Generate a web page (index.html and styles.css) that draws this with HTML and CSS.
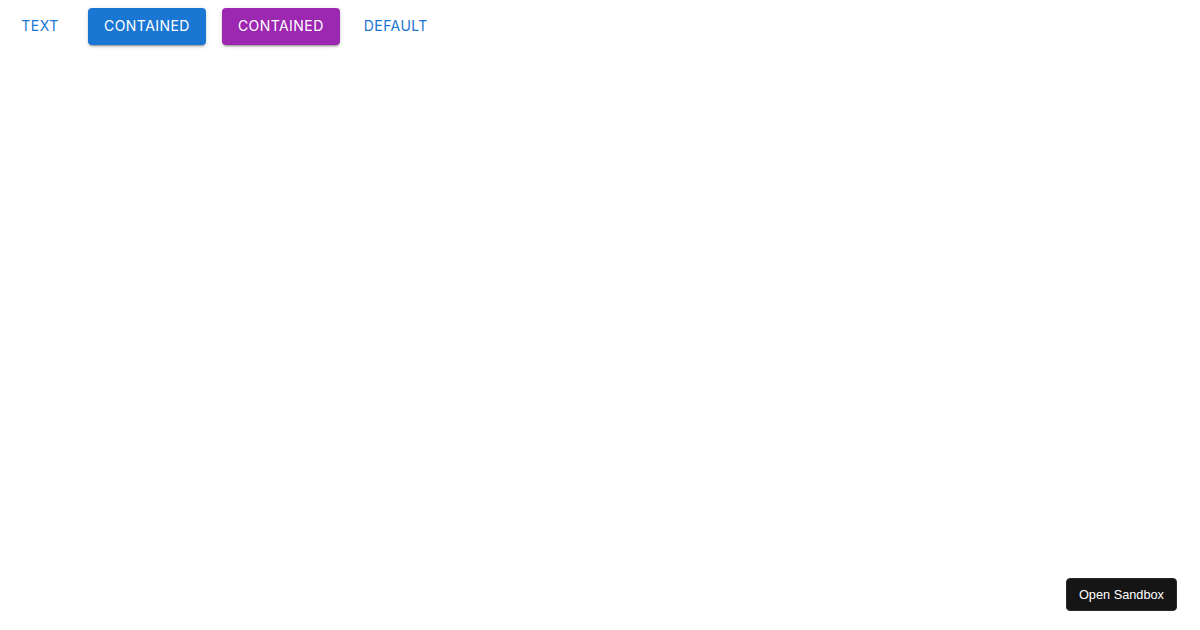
FILE: index.html
```html
<!DOCTYPE html>
<html>
<head>
<meta charset="utf-8">
<link rel="stylesheet" href="styles.css">
</head>
<body>
<div class="row">
  <button class="btn btn-text">Text</button>
  <button class="btn btn-contained primary">Contained</button>
  <button class="btn btn-contained secondary">Contained</button>
  <button class="btn btn-text">Default</button>
</div>
<a class="sandbox">Open Sandbox</a>
</body>
</html>
```
FILE: styles.css
```css
html, body {
  margin: 0;
  padding: 0;
  background: #fff;
}
.row {
  display: flex;
  align-items: flex-start;
}
.btn {
  margin: 8px;
  border: 0;
  border-radius: 4px;
  font-family: Inter, Roboto, "Liberation Sans", sans-serif;
  font-weight: 400;
  font-size: 14px;
  line-height: 1.75;
  letter-spacing: 0.45px;
  text-transform: uppercase;
  min-width: 64px;
  cursor: pointer;
  box-sizing: border-box;
}
.btn-text {
  background: transparent;
  color: #1976d2;
  padding: 6px 8px;
}
.btn-contained {
  color: #fff;
  padding: 6px 16px;
  box-shadow: 0px 3px 1px -2px rgba(0,0,0,0.2), 0px 2px 2px 0px rgba(0,0,0,0.14), 0px 1px 5px 0px rgba(0,0,0,0.12);
}
.primary { background: #1976d2; }
.secondary { background: #9c27b0; }
.sandbox {
  position: fixed;
  right: 23px;
  bottom: 19px;
  background: #151515;
  color: #fff;
  font-family: "Liberation Sans", Arial, sans-serif;
  font-size: 12.75px;
  line-height: 17px;
  padding: 7px 12px;
  border-radius: 4px;
  border: 1px solid #2a2a2a;
}
```
